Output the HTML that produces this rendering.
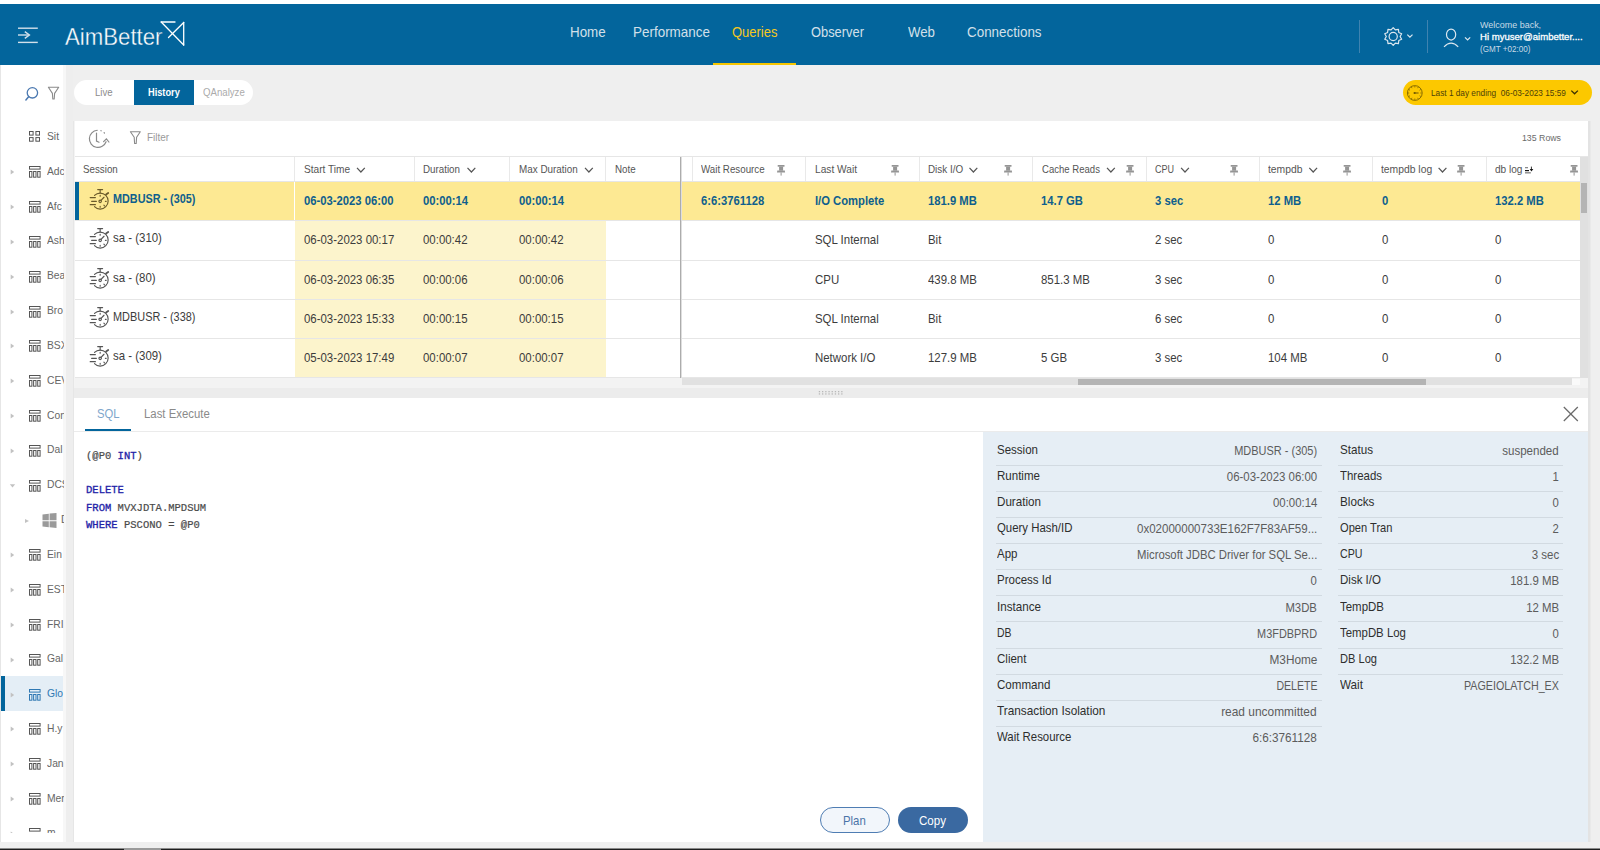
<!DOCTYPE html>
<html><head><meta charset="utf-8"><title>AimBetter - Queries</title>
<style>
html,body{margin:0;padding:0;}
body{width:1600px;height:850px;overflow:hidden;position:relative;background:#efefef;font-family:"Liberation Sans",sans-serif;}
.t{position:absolute;white-space:pre;}
svg{overflow:visible}
</style></head><body>
<div style="position:absolute;left:0px;top:0px;width:1600px;height:4px;background:#ffffff;"></div>
<div style="position:absolute;left:0px;top:4px;width:1600px;height:61px;background:#03659c;"></div>
<div style="position:absolute;left:0px;top:842px;width:1600px;height:6px;background:#efefef;"></div>
<div style="position:absolute;left:0px;top:848px;width:1600px;height:1px;background:#8a8a8a;"></div>
<div style="position:absolute;left:0px;top:849px;width:1600px;height:1px;background:#1e1e1e;"></div>
<div style="position:absolute;left:124px;top:848px;width:37px;height:2px;background:#9a9a9a;"></div>
<svg style="position:absolute;left:0px;top:0px;" width="60" height="65" viewBox="0 0 60 65"><g stroke="#d3e0ea" stroke-width="1.4" fill="none"><line x1="18" y1="28.2" x2="37.8" y2="28.2"/><line x1="18" y1="42.4" x2="37.8" y2="42.4"/><line x1="18" y1="35" x2="29.2" y2="35"/><polyline points="24.8,31.6 29.4,35 24.8,38.4"/></g></svg>
<div class="t" style="left:64.80px;transform-origin:0 0;top:26.39px;font-size:23.4px;line-height:23.4px;color:#ffffff;transform:scaleX(0.9491);-webkit-text-stroke:0.35px #03659c;">AimBetter</div>
<svg style="position:absolute;left:150px;top:15px;" width="45" height="40" viewBox="0 0 45 40"><g stroke="#ffffff" stroke-width="1.3" fill="none" stroke-linecap="round"><line x1="11.2" y1="7" x2="25" y2="7"/><line x1="11.2" y1="7" x2="33.7" y2="30"/><line x1="33.7" y1="7.5" x2="33.7" y2="30"/><line x1="33.7" y1="7.5" x2="18.5" y2="22.5"/></g></svg>
<div class="t" style="left:569.80px;transform-origin:0 0;top:25.31px;font-size:14.4px;line-height:14.4px;color:#d3e0ea;transform:scaleX(0.9294);">Home</div>
<div class="t" style="left:632.50px;transform-origin:0 0;top:25.31px;font-size:14.4px;line-height:14.4px;color:#d3e0ea;transform:scaleX(0.9340);">Performance</div>
<div class="t" style="left:731.50px;transform-origin:0 0;top:25.31px;font-size:14.4px;line-height:14.4px;color:#f6c81e;transform:scaleX(0.9024);">Queries</div>
<div class="t" style="left:811.00px;transform-origin:0 0;top:25.31px;font-size:14.4px;line-height:14.4px;color:#d3e0ea;transform:scaleX(0.8950);">Observer</div>
<div class="t" style="left:907.50px;transform-origin:0 0;top:25.31px;font-size:14.4px;line-height:14.4px;color:#d3e0ea;transform:scaleX(0.9200);">Web</div>
<div class="t" style="left:967.00px;transform-origin:0 0;top:25.31px;font-size:14.4px;line-height:14.4px;color:#d3e0ea;transform:scaleX(0.9319);">Connections</div>
<div style="position:absolute;left:713px;top:63px;width:83px;height:2px;background:#f7c600;"></div>
<div style="position:absolute;left:1359px;top:20px;width:1px;height:33px;background:#3f83b0;"></div>
<div style="position:absolute;left:1426.5px;top:20px;width:1.0px;height:33px;background:#3f83b0;"></div>
<svg style="position:absolute;left:0px;top:0px;pointer-events:none;" width="1600" height="65" viewBox="0 0 1600 65"><g stroke="#dce7ef" stroke-width="1.2" fill="none"><polygon points="1393.20,27.60 1395.33,29.94 1398.43,29.30 1398.78,32.44 1401.66,33.75 1400.10,36.50 1401.66,39.25 1398.78,40.56 1398.43,43.70 1395.33,43.06 1393.20,45.40 1391.07,43.06 1387.97,43.70 1387.62,40.56 1384.74,39.25 1386.30,36.50 1384.74,33.75 1387.62,32.44 1387.97,29.30 1391.07,29.94" stroke-linejoin="round"/><circle cx="1393.2" cy="36.5" r="4.1"/><polyline points="1407.3,34.6 1409.9,37.2 1412.5,34.6"/><ellipse cx="1451.1" cy="34.6" rx="4.6" ry="5.5"/><path d="M1444,46.8 Q1451.1,39.5 1458.2,46.8"/><polyline points="1465,37.4 1467.6,40 1470.2,37.4"/></g></svg>
<div class="t" style="left:1479.80px;transform-origin:0 0;top:21.08px;font-size:9.0px;line-height:9.0px;color:#c9dae6;transform:scaleX(0.9958);">Welcome back,</div>
<div class="t" style="left:1479.80px;transform-origin:0 0;top:32.20px;font-size:9.8px;line-height:9.8px;color:#ffffff;transform:scaleX(0.9757);-webkit-text-stroke:0.3px #ffffff;">Hi myuser@aimbetter....</div>
<div class="t" style="left:1479.60px;transform-origin:0 0;top:45.66px;font-size:8.2px;line-height:8.2px;color:#c9dae6;transform:scaleX(0.9859);">(GMT +02:00)</div>
<div style="position:absolute;left:0px;top:65px;width:63px;height:777px;background:#ffffff;box-shadow:inset 1px 0 0 #e6e6e6;"></div>
<div style="position:absolute;left:63px;top:65px;width:3px;height:777px;background:#f7f7f7;"></div>
<div style="position:absolute;left:66px;top:65px;width:7px;height:777px;background:#eeeeee;"></div>
<div style="position:absolute;left:73px;top:121px;width:1px;height:721px;background:#e6e6e6;"></div>
<svg style="position:absolute;left:0px;top:60px;" width="70" height="50" viewBox="0 0 70 50"><g fill="none" stroke-linecap="round"><circle cx="32.4" cy="32.8" r="5.2" stroke="#4a78b0" stroke-width="1.3"/><line x1="28.6" y1="36.8" x2="25.9" y2="39.9" stroke="#4a78b0" stroke-width="1.5"/><path d="M48.4,27.3 L58.7,27.3 L54.6,33.4 L54.2,39 L52.8,39 L52.4,33.4 Z" stroke="#8a8a8a" stroke-width="1.1" stroke-linejoin="round"/></g></svg>
<svg style="position:absolute;left:28px;top:130px;" width="14" height="14" viewBox="0 0 14 14"><g fill="none" stroke="#555" stroke-width="1"><rect x="1.5" y="1.5" width="3.6" height="3.6"/><rect x="7.9" y="1.5" width="3.6" height="3.6"/><rect x="1.5" y="7.6" width="3.6" height="3.6"/><rect x="7.9" y="7.6" width="3.6" height="3.6"/></g></svg>
<div class="t" style="left:46.80px;transform-origin:0 0;top:130.72px;font-size:11.2px;line-height:11.2px;color:#666666;transform:scaleX(0.9200);">Sit</div>
<div style="position:absolute;left:0;top:65px;width:64px;height:768px;overflow:hidden;">
<svg style="position:absolute;left:0px;top:97.32px;" width="20" height="20" viewBox="0 0 20 20"><polygon points="10.7,7.4 14.2,10 10.7,12.6" fill="#c2c2c2"/></svg>
<svg style="position:absolute;left:28px;top:100.32px;" width="14" height="16" viewBox="0 0 14 16"><g fill="none" stroke="#555555" stroke-width="1"><rect x="1.5" y="1.5" width="10.6" height="2.6"/><rect x="1.5" y="6.5" width="2.4" height="5.7"/><rect x="5.6" y="6.5" width="2.4" height="5.7"/><rect x="9.7" y="6.5" width="2.4" height="5.7"/></g></svg>
<div class="t" style="left:46.80px;transform-origin:0 0;top:100.84px;font-size:11.2px;line-height:11.2px;color:#666666;transform:scaleX(0.9200);">Adc</div>
<svg style="position:absolute;left:0px;top:132.14px;" width="20" height="20" viewBox="0 0 20 20"><polygon points="10.7,7.4 14.2,10 10.7,12.6" fill="#c2c2c2"/></svg>
<svg style="position:absolute;left:28px;top:135.14px;" width="14" height="16" viewBox="0 0 14 16"><g fill="none" stroke="#555555" stroke-width="1"><rect x="1.5" y="1.5" width="10.6" height="2.6"/><rect x="1.5" y="6.5" width="2.4" height="5.7"/><rect x="5.6" y="6.5" width="2.4" height="5.7"/><rect x="9.7" y="6.5" width="2.4" height="5.7"/></g></svg>
<div class="t" style="left:46.80px;transform-origin:0 0;top:135.66px;font-size:11.2px;line-height:11.2px;color:#666666;transform:scaleX(0.9200);">Afc</div>
<svg style="position:absolute;left:0px;top:166.96px;" width="20" height="20" viewBox="0 0 20 20"><polygon points="10.7,7.4 14.2,10 10.7,12.6" fill="#c2c2c2"/></svg>
<svg style="position:absolute;left:28px;top:169.96px;" width="14" height="16" viewBox="0 0 14 16"><g fill="none" stroke="#555555" stroke-width="1"><rect x="1.5" y="1.5" width="10.6" height="2.6"/><rect x="1.5" y="6.5" width="2.4" height="5.7"/><rect x="5.6" y="6.5" width="2.4" height="5.7"/><rect x="9.7" y="6.5" width="2.4" height="5.7"/></g></svg>
<div class="t" style="left:46.80px;transform-origin:0 0;top:170.48px;font-size:11.2px;line-height:11.2px;color:#666666;transform:scaleX(0.9200);">Ash</div>
<svg style="position:absolute;left:0px;top:201.77999999999997px;" width="20" height="20" viewBox="0 0 20 20"><polygon points="10.7,7.4 14.2,10 10.7,12.6" fill="#c2c2c2"/></svg>
<svg style="position:absolute;left:28px;top:204.77999999999997px;" width="14" height="16" viewBox="0 0 14 16"><g fill="none" stroke="#555555" stroke-width="1"><rect x="1.5" y="1.5" width="10.6" height="2.6"/><rect x="1.5" y="6.5" width="2.4" height="5.7"/><rect x="5.6" y="6.5" width="2.4" height="5.7"/><rect x="9.7" y="6.5" width="2.4" height="5.7"/></g></svg>
<div class="t" style="left:46.80px;transform-origin:0 0;top:205.30px;font-size:11.2px;line-height:11.2px;color:#666666;transform:scaleX(0.9200);">Bea</div>
<svg style="position:absolute;left:0px;top:236.60000000000002px;" width="20" height="20" viewBox="0 0 20 20"><polygon points="10.7,7.4 14.2,10 10.7,12.6" fill="#c2c2c2"/></svg>
<svg style="position:absolute;left:28px;top:239.60000000000002px;" width="14" height="16" viewBox="0 0 14 16"><g fill="none" stroke="#555555" stroke-width="1"><rect x="1.5" y="1.5" width="10.6" height="2.6"/><rect x="1.5" y="6.5" width="2.4" height="5.7"/><rect x="5.6" y="6.5" width="2.4" height="5.7"/><rect x="9.7" y="6.5" width="2.4" height="5.7"/></g></svg>
<div class="t" style="left:46.80px;transform-origin:0 0;top:240.12px;font-size:11.2px;line-height:11.2px;color:#666666;transform:scaleX(0.9200);">Bro</div>
<svg style="position:absolute;left:0px;top:271.42px;" width="20" height="20" viewBox="0 0 20 20"><polygon points="10.7,7.4 14.2,10 10.7,12.6" fill="#c2c2c2"/></svg>
<svg style="position:absolute;left:28px;top:274.42px;" width="14" height="16" viewBox="0 0 14 16"><g fill="none" stroke="#555555" stroke-width="1"><rect x="1.5" y="1.5" width="10.6" height="2.6"/><rect x="1.5" y="6.5" width="2.4" height="5.7"/><rect x="5.6" y="6.5" width="2.4" height="5.7"/><rect x="9.7" y="6.5" width="2.4" height="5.7"/></g></svg>
<div class="t" style="left:46.80px;transform-origin:0 0;top:274.94px;font-size:11.2px;line-height:11.2px;color:#666666;transform:scaleX(0.9200);">BSX</div>
<svg style="position:absolute;left:0px;top:306.24px;" width="20" height="20" viewBox="0 0 20 20"><polygon points="10.7,7.4 14.2,10 10.7,12.6" fill="#c2c2c2"/></svg>
<svg style="position:absolute;left:28px;top:309.24px;" width="14" height="16" viewBox="0 0 14 16"><g fill="none" stroke="#555555" stroke-width="1"><rect x="1.5" y="1.5" width="10.6" height="2.6"/><rect x="1.5" y="6.5" width="2.4" height="5.7"/><rect x="5.6" y="6.5" width="2.4" height="5.7"/><rect x="9.7" y="6.5" width="2.4" height="5.7"/></g></svg>
<div class="t" style="left:46.80px;transform-origin:0 0;top:309.76px;font-size:11.2px;line-height:11.2px;color:#666666;transform:scaleX(0.9200);">CEV</div>
<svg style="position:absolute;left:0px;top:341.06px;" width="20" height="20" viewBox="0 0 20 20"><polygon points="10.7,7.4 14.2,10 10.7,12.6" fill="#c2c2c2"/></svg>
<svg style="position:absolute;left:28px;top:344.06px;" width="14" height="16" viewBox="0 0 14 16"><g fill="none" stroke="#555555" stroke-width="1"><rect x="1.5" y="1.5" width="10.6" height="2.6"/><rect x="1.5" y="6.5" width="2.4" height="5.7"/><rect x="5.6" y="6.5" width="2.4" height="5.7"/><rect x="9.7" y="6.5" width="2.4" height="5.7"/></g></svg>
<div class="t" style="left:46.80px;transform-origin:0 0;top:344.58px;font-size:11.2px;line-height:11.2px;color:#666666;transform:scaleX(0.9200);">Con</div>
<svg style="position:absolute;left:0px;top:375.88px;" width="20" height="20" viewBox="0 0 20 20"><polygon points="10.7,7.4 14.2,10 10.7,12.6" fill="#c2c2c2"/></svg>
<svg style="position:absolute;left:28px;top:378.88px;" width="14" height="16" viewBox="0 0 14 16"><g fill="none" stroke="#555555" stroke-width="1"><rect x="1.5" y="1.5" width="10.6" height="2.6"/><rect x="1.5" y="6.5" width="2.4" height="5.7"/><rect x="5.6" y="6.5" width="2.4" height="5.7"/><rect x="9.7" y="6.5" width="2.4" height="5.7"/></g></svg>
<div class="t" style="left:46.80px;transform-origin:0 0;top:379.40px;font-size:11.2px;line-height:11.2px;color:#666666;transform:scaleX(0.9200);">Dal</div>
<svg style="position:absolute;left:0px;top:410.7px;" width="20" height="20" viewBox="0 0 20 20"><polygon points="9.8,8.3 15.2,8.3 12.5,11.5" fill="#c2c2c2"/></svg>
<svg style="position:absolute;left:28px;top:413.7px;" width="14" height="16" viewBox="0 0 14 16"><g fill="none" stroke="#555555" stroke-width="1"><rect x="1.5" y="1.5" width="10.6" height="2.6"/><rect x="1.5" y="6.5" width="2.4" height="5.7"/><rect x="5.6" y="6.5" width="2.4" height="5.7"/><rect x="9.7" y="6.5" width="2.4" height="5.7"/></g></svg>
<div class="t" style="left:46.80px;transform-origin:0 0;top:414.22px;font-size:11.2px;line-height:11.2px;color:#666666;transform:scaleX(0.9200);">DCS</div>
<svg style="position:absolute;left:20px;top:445.52px;" width="45" height="20" viewBox="0 0 45 20"><polygon points="5,8 9,10 5,12" fill="#c2c2c2"/><g fill="#9a9a9a"><path d="M22.5,3.4 L28.8,2.7 L28.8,9.3 L22.5,9.3 Z"/><path d="M29.6,2.6 L36.5,1.9 L36.5,9.3 L29.6,9.3 Z"/><path d="M22.5,10.2 L28.8,10.2 L28.8,16.2 L22.5,15.6 Z"/><path d="M29.6,10.2 L36.5,10.2 L36.5,17 L29.6,16.3 Z"/></g></svg>
<div class="t" style="left:61.00px;transform-origin:0 0;top:449.04px;font-size:11.2px;line-height:11.2px;color:#666666;transform:scaleX(0.9200);">D</div>
<svg style="position:absolute;left:0px;top:480.34000000000003px;" width="20" height="20" viewBox="0 0 20 20"><polygon points="10.7,7.4 14.2,10 10.7,12.6" fill="#c2c2c2"/></svg>
<svg style="position:absolute;left:28px;top:483.34000000000003px;" width="14" height="16" viewBox="0 0 14 16"><g fill="none" stroke="#555555" stroke-width="1"><rect x="1.5" y="1.5" width="10.6" height="2.6"/><rect x="1.5" y="6.5" width="2.4" height="5.7"/><rect x="5.6" y="6.5" width="2.4" height="5.7"/><rect x="9.7" y="6.5" width="2.4" height="5.7"/></g></svg>
<div class="t" style="left:46.80px;transform-origin:0 0;top:483.86px;font-size:11.2px;line-height:11.2px;color:#666666;transform:scaleX(0.9200);">Ein</div>
<svg style="position:absolute;left:0px;top:515.1600000000001px;" width="20" height="20" viewBox="0 0 20 20"><polygon points="10.7,7.4 14.2,10 10.7,12.6" fill="#c2c2c2"/></svg>
<svg style="position:absolute;left:28px;top:518.1600000000001px;" width="14" height="16" viewBox="0 0 14 16"><g fill="none" stroke="#555555" stroke-width="1"><rect x="1.5" y="1.5" width="10.6" height="2.6"/><rect x="1.5" y="6.5" width="2.4" height="5.7"/><rect x="5.6" y="6.5" width="2.4" height="5.7"/><rect x="9.7" y="6.5" width="2.4" height="5.7"/></g></svg>
<div class="t" style="left:46.80px;transform-origin:0 0;top:518.68px;font-size:11.2px;line-height:11.2px;color:#666666;transform:scaleX(0.9200);">EST</div>
<svg style="position:absolute;left:0px;top:549.98px;" width="20" height="20" viewBox="0 0 20 20"><polygon points="10.7,7.4 14.2,10 10.7,12.6" fill="#c2c2c2"/></svg>
<svg style="position:absolute;left:28px;top:552.98px;" width="14" height="16" viewBox="0 0 14 16"><g fill="none" stroke="#555555" stroke-width="1"><rect x="1.5" y="1.5" width="10.6" height="2.6"/><rect x="1.5" y="6.5" width="2.4" height="5.7"/><rect x="5.6" y="6.5" width="2.4" height="5.7"/><rect x="9.7" y="6.5" width="2.4" height="5.7"/></g></svg>
<div class="t" style="left:46.80px;transform-origin:0 0;top:553.50px;font-size:11.2px;line-height:11.2px;color:#666666;transform:scaleX(0.9200);">FRI</div>
<svg style="position:absolute;left:0px;top:584.8px;" width="20" height="20" viewBox="0 0 20 20"><polygon points="10.7,7.4 14.2,10 10.7,12.6" fill="#c2c2c2"/></svg>
<svg style="position:absolute;left:28px;top:587.8px;" width="14" height="16" viewBox="0 0 14 16"><g fill="none" stroke="#555555" stroke-width="1"><rect x="1.5" y="1.5" width="10.6" height="2.6"/><rect x="1.5" y="6.5" width="2.4" height="5.7"/><rect x="5.6" y="6.5" width="2.4" height="5.7"/><rect x="9.7" y="6.5" width="2.4" height="5.7"/></g></svg>
<div class="t" style="left:46.80px;transform-origin:0 0;top:588.32px;font-size:11.2px;line-height:11.2px;color:#666666;transform:scaleX(0.9200);">Gal</div>
<div style="position:absolute;left:1px;top:611.12px;width:62px;height:35.0px;background:#e4eef6;"></div>
<div style="position:absolute;left:1px;top:611.12px;width:4px;height:35.0px;background:#03659c;"></div>
<svg style="position:absolute;left:0px;top:619.62px;" width="20" height="20" viewBox="0 0 20 20"><polygon points="10.7,7.4 14.2,10 10.7,12.6" fill="#c2c2c2"/></svg>
<svg style="position:absolute;left:28px;top:622.62px;" width="14" height="16" viewBox="0 0 14 16"><g fill="none" stroke="#2f78b3" stroke-width="1"><rect x="1.5" y="1.5" width="10.6" height="2.6"/><rect x="1.5" y="6.5" width="2.4" height="5.7"/><rect x="5.6" y="6.5" width="2.4" height="5.7"/><rect x="9.7" y="6.5" width="2.4" height="5.7"/></g></svg>
<div class="t" style="left:46.80px;transform-origin:0 0;top:623.14px;font-size:11.2px;line-height:11.2px;color:#2f78b3;transform:scaleX(0.9200);">Glo</div>
<svg style="position:absolute;left:0px;top:654.44px;" width="20" height="20" viewBox="0 0 20 20"><polygon points="10.7,7.4 14.2,10 10.7,12.6" fill="#c2c2c2"/></svg>
<svg style="position:absolute;left:28px;top:657.44px;" width="14" height="16" viewBox="0 0 14 16"><g fill="none" stroke="#555555" stroke-width="1"><rect x="1.5" y="1.5" width="10.6" height="2.6"/><rect x="1.5" y="6.5" width="2.4" height="5.7"/><rect x="5.6" y="6.5" width="2.4" height="5.7"/><rect x="9.7" y="6.5" width="2.4" height="5.7"/></g></svg>
<div class="t" style="left:46.80px;transform-origin:0 0;top:657.96px;font-size:11.2px;line-height:11.2px;color:#666666;transform:scaleX(0.9200);">H.y</div>
<svg style="position:absolute;left:0px;top:689.26px;" width="20" height="20" viewBox="0 0 20 20"><polygon points="10.7,7.4 14.2,10 10.7,12.6" fill="#c2c2c2"/></svg>
<svg style="position:absolute;left:28px;top:692.26px;" width="14" height="16" viewBox="0 0 14 16"><g fill="none" stroke="#555555" stroke-width="1"><rect x="1.5" y="1.5" width="10.6" height="2.6"/><rect x="1.5" y="6.5" width="2.4" height="5.7"/><rect x="5.6" y="6.5" width="2.4" height="5.7"/><rect x="9.7" y="6.5" width="2.4" height="5.7"/></g></svg>
<div class="t" style="left:46.80px;transform-origin:0 0;top:692.78px;font-size:11.2px;line-height:11.2px;color:#666666;transform:scaleX(0.9200);">Jan</div>
<svg style="position:absolute;left:0px;top:724.08px;" width="20" height="20" viewBox="0 0 20 20"><polygon points="10.7,7.4 14.2,10 10.7,12.6" fill="#c2c2c2"/></svg>
<svg style="position:absolute;left:28px;top:727.08px;" width="14" height="16" viewBox="0 0 14 16"><g fill="none" stroke="#555555" stroke-width="1"><rect x="1.5" y="1.5" width="10.6" height="2.6"/><rect x="1.5" y="6.5" width="2.4" height="5.7"/><rect x="5.6" y="6.5" width="2.4" height="5.7"/><rect x="9.7" y="6.5" width="2.4" height="5.7"/></g></svg>
<div class="t" style="left:46.80px;transform-origin:0 0;top:727.60px;font-size:11.2px;line-height:11.2px;color:#666666;transform:scaleX(0.9200);">Mer</div>
<svg style="position:absolute;left:0px;top:758.9px;" width="20" height="20" viewBox="0 0 20 20"><polygon points="10.7,7.4 14.2,10 10.7,12.6" fill="#c2c2c2"/></svg>
<svg style="position:absolute;left:28px;top:761.9px;" width="14" height="16" viewBox="0 0 14 16"><g fill="none" stroke="#555555" stroke-width="1"><rect x="1.5" y="1.5" width="10.6" height="2.6"/><rect x="1.5" y="6.5" width="2.4" height="5.7"/><rect x="5.6" y="6.5" width="2.4" height="5.7"/><rect x="9.7" y="6.5" width="2.4" height="5.7"/></g></svg>
<div class="t" style="left:46.80px;transform-origin:0 0;top:762.42px;font-size:11.2px;line-height:11.2px;color:#666666;transform:scaleX(0.9200);">m..</div>
</div>
<div style="position:absolute;left:74px;top:80px;width:179px;height:25px;background:#ffffff;border-radius:12.5px;"></div>
<div style="position:absolute;left:134px;top:80px;width:59.5px;height:25px;background:#03659c;"></div>
<div class="t" style="left:95.30px;transform-origin:0 0;top:86.99px;font-size:11px;line-height:11px;color:#8c8c8c;transform:scaleX(0.8722);">Live</div>
<div class="t" style="left:148.20px;transform-origin:0 0;top:86.99px;font-size:11px;line-height:11px;color:#ffffff;font-weight:700;transform:scaleX(0.8391);">History</div>
<div class="t" style="left:203.00px;transform-origin:0 0;top:86.99px;font-size:11px;line-height:11px;color:#ababab;transform:scaleX(0.8765);">QAnalyze</div>
<div style="position:absolute;left:1403px;top:80px;width:189px;height:25px;background:#fcc800;border-radius:12.5px;"></div>
<svg style="position:absolute;left:1400px;top:78px;" width="30" height="30" viewBox="0 0 30 30"><g fill="none" stroke="#6e5800" stroke-width="0.8"><circle cx="14.8" cy="15" r="7.4"/><line x1="20.40" y1="15.00" x2="21.60" y2="15.00"/><line x1="19.65" y1="17.80" x2="20.69" y2="18.40"/><line x1="17.60" y1="19.85" x2="18.20" y2="20.89"/><line x1="14.80" y1="20.60" x2="14.80" y2="21.80"/><line x1="12.00" y1="19.85" x2="11.40" y2="20.89"/><line x1="9.95" y1="17.80" x2="8.91" y2="18.40"/><line x1="9.20" y1="15.00" x2="8.00" y2="15.00"/><line x1="9.95" y1="12.20" x2="8.91" y2="11.60"/><line x1="12.00" y1="10.15" x2="11.40" y2="9.11"/><line x1="14.80" y1="9.40" x2="14.80" y2="8.20"/><line x1="17.60" y1="10.15" x2="18.20" y2="9.11"/><line x1="19.65" y1="12.20" x2="20.69" y2="11.60"/><line x1="14.8" y1="15" x2="18.6" y2="15" stroke-width="1"/></g><circle cx="14.6" cy="15" r="1.1" fill="#6e5800"/></svg>
<div class="t" style="left:1431.00px;transform-origin:0 0;top:88.72px;font-size:8.6px;line-height:8.6px;color:#4d3f08;transform:scaleX(0.9603);">Last 1 day ending  06-03-2023 15:59</div>
<svg style="position:absolute;left:1560px;top:80px;" width="30" height="25" viewBox="0 0 30 25"><polyline points="11.3,10.6 14.6,13.8 17.9,10.6" fill="none" stroke="#3b3000" stroke-width="1.3"/></svg>
<div style="position:absolute;left:74px;top:121px;width:1514px;height:265px;background:#ffffff;"></div>
<div style="position:absolute;left:74px;top:121px;width:1px;height:265px;background:#f4f4f4;"></div>
<div style="position:absolute;left:75px;top:155.5px;width:1513px;height:1.1999999999999886px;background:#e6e6e6;"></div>
<svg style="position:absolute;left:80px;top:120px;" width="80" height="40" viewBox="0 0 80 40"><g fill="none" stroke="#8a8a8a" stroke-width="1.2" stroke-linecap="round"><path d="M 26.08,21.74 A 8.6,8.6 0 1 1 17.25,10.23"/><path d="M 20.9,10.7 L 21.2,10.8 M 24.1,12.7 L 24.4,13"/><polyline points="16.5,13 16.5,21 19,22.2"/><polyline points="23.6,21.6 26.4,18.8 28.9,22"/><path d="M50.4,11.8 L60.3,11.8 L56.6,17.2 L56.2,23.5 L54.6,23.5 L54.2,17.2 Z" stroke-linejoin="round" stroke-width="1.1"/></g></svg>
<div class="t" style="left:146.80px;transform-origin:0 0;top:131.69px;font-size:11px;line-height:11px;color:#9a9a9a;transform:scaleX(0.9082);">Filter</div>
<div class="t" style="left:1522.00px;transform-origin:0 0;top:133.47px;font-size:9.6px;line-height:9.6px;color:#6a6a6a;transform:scaleX(0.9136);">135 Rows</div>
<div style="position:absolute;left:294.0px;top:156.7px;width:1.0px;height:25.100000000000023px;background:#e9e9e9;"></div>
<div style="position:absolute;left:413.5px;top:156.7px;width:1.0px;height:25.100000000000023px;background:#e9e9e9;"></div>
<div style="position:absolute;left:509.0px;top:156.7px;width:1.0px;height:25.100000000000023px;background:#e9e9e9;"></div>
<div style="position:absolute;left:605.0px;top:156.7px;width:1.0px;height:25.100000000000023px;background:#e9e9e9;"></div>
<div style="position:absolute;left:692.0px;top:156.7px;width:1.0px;height:25.100000000000023px;background:#e9e9e9;"></div>
<div style="position:absolute;left:805.0px;top:156.7px;width:1.0px;height:25.100000000000023px;background:#e9e9e9;"></div>
<div style="position:absolute;left:919.0px;top:156.7px;width:1.0px;height:25.100000000000023px;background:#e9e9e9;"></div>
<div style="position:absolute;left:1032.0px;top:156.7px;width:1.0px;height:25.100000000000023px;background:#e9e9e9;"></div>
<div style="position:absolute;left:1145.5px;top:156.7px;width:1.0px;height:25.100000000000023px;background:#e9e9e9;"></div>
<div style="position:absolute;left:1259.0px;top:156.7px;width:1.0px;height:25.100000000000023px;background:#e9e9e9;"></div>
<div style="position:absolute;left:1372.0px;top:156.7px;width:1.0px;height:25.100000000000023px;background:#e9e9e9;"></div>
<div style="position:absolute;left:1485.5px;top:156.7px;width:1.0px;height:25.100000000000023px;background:#e9e9e9;"></div>
<div style="position:absolute;left:75px;top:181.0px;width:1505px;height:0.8000000000000114px;background:#e6e6e6;"></div>
<div class="t" style="left:82.50px;transform-origin:0 0;top:164.27px;font-size:11.2px;line-height:11.2px;color:#555555;transform:scaleX(0.8733);">Session</div>
<div class="t" style="left:303.75px;transform-origin:0 0;top:164.27px;font-size:11.2px;line-height:11.2px;color:#555555;transform:scaleX(0.9062);">Start Time</div>
<div class="t" style="left:423.00px;transform-origin:0 0;top:164.27px;font-size:11.2px;line-height:11.2px;color:#555555;transform:scaleX(0.8740);">Duration</div>
<div class="t" style="left:518.75px;transform-origin:0 0;top:164.27px;font-size:11.2px;line-height:11.2px;color:#555555;transform:scaleX(0.8821);">Max Duration</div>
<div class="t" style="left:615.00px;transform-origin:0 0;top:164.27px;font-size:11.2px;line-height:11.2px;color:#555555;transform:scaleX(0.8771);">Note</div>
<div class="t" style="left:701.40px;transform-origin:0 0;top:164.27px;font-size:11.2px;line-height:11.2px;color:#555555;transform:scaleX(0.8722);">Wait Resource</div>
<svg style="position:absolute;left:777px;top:164.9px;" width="10" height="12" viewBox="0 0 10 12"><g fill="#959595"><rect x="0.7" y="0" width="6.8" height="1.7"/><rect x="2.1" y="1.6" width="4" height="4.1"/><path d="M0.3,5.6 L7.8,5.6 L8.1,7.5 L0,7.5 Z"/><rect x="3.6" y="7.4" width="1" height="3.2"/></g></svg>
<div class="t" style="left:814.60px;transform-origin:0 0;top:164.27px;font-size:11.2px;line-height:11.2px;color:#555555;transform:scaleX(0.9100);">Last Wait</div>
<svg style="position:absolute;left:890.6px;top:164.9px;" width="10" height="12" viewBox="0 0 10 12"><g fill="#959595"><rect x="0.7" y="0" width="6.8" height="1.7"/><rect x="2.1" y="1.6" width="4" height="4.1"/><path d="M0.3,5.6 L7.8,5.6 L8.1,7.5 L0,7.5 Z"/><rect x="3.6" y="7.4" width="1" height="3.2"/></g></svg>
<div class="t" style="left:928.20px;transform-origin:0 0;top:164.27px;font-size:11.2px;line-height:11.2px;color:#555555;transform:scaleX(0.8814);">Disk I/O</div>
<svg style="position:absolute;left:1003.8px;top:164.9px;" width="10" height="12" viewBox="0 0 10 12"><g fill="#959595"><rect x="0.7" y="0" width="6.8" height="1.7"/><rect x="2.1" y="1.6" width="4" height="4.1"/><path d="M0.3,5.6 L7.8,5.6 L8.1,7.5 L0,7.5 Z"/><rect x="3.6" y="7.4" width="1" height="3.2"/></g></svg>
<div class="t" style="left:1041.80px;transform-origin:0 0;top:164.27px;font-size:11.2px;line-height:11.2px;color:#555555;transform:scaleX(0.8547);">Cache Reads</div>
<svg style="position:absolute;left:1125.5px;top:164.9px;" width="10" height="12" viewBox="0 0 10 12"><g fill="#959595"><rect x="0.7" y="0" width="6.8" height="1.7"/><rect x="2.1" y="1.6" width="4" height="4.1"/><path d="M0.3,5.6 L7.8,5.6 L8.1,7.5 L0,7.5 Z"/><rect x="3.6" y="7.4" width="1" height="3.2"/></g></svg>
<div class="t" style="left:1154.60px;transform-origin:0 0;top:164.27px;font-size:11.2px;line-height:11.2px;color:#555555;transform:scaleX(0.8077);">CPU</div>
<svg style="position:absolute;left:1230.2px;top:164.9px;" width="10" height="12" viewBox="0 0 10 12"><g fill="#959595"><rect x="0.7" y="0" width="6.8" height="1.7"/><rect x="2.1" y="1.6" width="4" height="4.1"/><path d="M0.3,5.6 L7.8,5.6 L8.1,7.5 L0,7.5 Z"/><rect x="3.6" y="7.4" width="1" height="3.2"/></g></svg>
<div class="t" style="left:1268.00px;transform-origin:0 0;top:164.27px;font-size:11.2px;line-height:11.2px;color:#555555;transform:scaleX(0.9235);">tempdb</div>
<svg style="position:absolute;left:1343px;top:164.9px;" width="10" height="12" viewBox="0 0 10 12"><g fill="#959595"><rect x="0.7" y="0" width="6.8" height="1.7"/><rect x="2.1" y="1.6" width="4" height="4.1"/><path d="M0.3,5.6 L7.8,5.6 L8.1,7.5 L0,7.5 Z"/><rect x="3.6" y="7.4" width="1" height="3.2"/></g></svg>
<div class="t" style="left:1381.30px;transform-origin:0 0;top:164.27px;font-size:11.2px;line-height:11.2px;color:#555555;transform:scaleX(0.9239);">tempdb log</div>
<svg style="position:absolute;left:1457px;top:164.9px;" width="10" height="12" viewBox="0 0 10 12"><g fill="#959595"><rect x="0.7" y="0" width="6.8" height="1.7"/><rect x="2.1" y="1.6" width="4" height="4.1"/><path d="M0.3,5.6 L7.8,5.6 L8.1,7.5 L0,7.5 Z"/><rect x="3.6" y="7.4" width="1" height="3.2"/></g></svg>
<div class="t" style="left:1495.00px;transform-origin:0 0;top:164.27px;font-size:11.2px;line-height:11.2px;color:#555555;transform:scaleX(0.9012);">db log</div>
<svg style="position:absolute;left:1570.3px;top:164.9px;" width="10" height="12" viewBox="0 0 10 12"><g fill="#959595"><rect x="0.7" y="0" width="6.8" height="1.7"/><rect x="2.1" y="1.6" width="4" height="4.1"/><path d="M0.3,5.6 L7.8,5.6 L8.1,7.5 L0,7.5 Z"/><rect x="3.6" y="7.4" width="1" height="3.2"/></g></svg>
<svg style="position:absolute;left:0px;top:0px;pointer-events:none;" width="1600" height="850" viewBox="0 0 1600 850"><g fill="none" stroke="#555" stroke-width="1.2"><polyline points="357.0,167.8 360.9,172.0 364.8,167.8"/><polyline points="467.5,167.8 471.4,172.0 475.3,167.8"/><polyline points="585.0,167.8 588.9,172.0 592.8,167.8"/><polyline points="969.5,167.8 973.4,172.0 977.3,167.8"/><polyline points="1107.0,167.8 1110.9,172.0 1114.8,167.8"/><polyline points="1181.1,167.8 1185.0,172.0 1188.9,167.8"/><polyline points="1309.3,167.8 1313.2,172.0 1317.1,167.8"/><polyline points="1438.6,167.8 1442.5,172.0 1446.4,167.8"/></g></svg>
<svg style="position:absolute;left:1520px;top:160px;" width="16" height="16" viewBox="0 0 16 16"><rect x="5" y="7" width="3" height="1.3" fill="#8a8a8a"/><rect x="5" y="10" width="4" height="1.2" fill="#111"/><rect x="5" y="12.1" width="5.8" height="1.4" fill="#8a8a8a"/><rect x="10.9" y="6.6" width="1" height="2.8" fill="#333"/><polygon points="9.7,9.1 13.3,9.1 11.4,11.6" fill="#111"/></svg>
<div style="position:absolute;left:75px;top:182px;width:1505px;height:38px;background:#fde993;"></div>
<div style="position:absolute;left:75px;top:182px;width:4px;height:38px;background:#03659c;"></div>
<div style="position:absolute;left:294px;top:182px;width:1px;height:38px;background:#ffffff;"></div>
<div style="position:absolute;left:75px;top:220px;width:1505px;height:1px;background:#e6e6e6;"></div>
<div class="t" style="left:113.00px;transform-origin:0 0;top:192.66px;font-size:12.1px;line-height:12.1px;color:#0f5f8d;font-weight:700;transform:scaleX(0.8946);">MDBUSR - (305)</div>
<div class="t" style="left:303.60px;transform-origin:0 0;top:194.56px;font-size:12.1px;line-height:12.1px;color:#0f5f8d;font-weight:700;transform:scaleX(0.9300);">06-03-2023 06:00</div>
<div class="t" style="left:422.80px;transform-origin:0 0;top:194.56px;font-size:12.1px;line-height:12.1px;color:#0f5f8d;font-weight:700;transform:scaleX(0.9300);">00:00:14</div>
<div class="t" style="left:518.80px;transform-origin:0 0;top:194.56px;font-size:12.1px;line-height:12.1px;color:#0f5f8d;font-weight:700;transform:scaleX(0.9300);">00:00:14</div>
<div class="t" style="left:701.00px;transform-origin:0 0;top:194.56px;font-size:12.1px;line-height:12.1px;color:#0f5f8d;font-weight:700;transform:scaleX(0.9300);">6:6:3761128</div>
<div class="t" style="left:814.60px;transform-origin:0 0;top:194.56px;font-size:12.1px;line-height:12.1px;color:#0f5f8d;font-weight:700;transform:scaleX(0.9300);">I/O Complete</div>
<div class="t" style="left:928.30px;transform-origin:0 0;top:194.56px;font-size:12.1px;line-height:12.1px;color:#0f5f8d;font-weight:700;transform:scaleX(0.9300);">181.9 MB</div>
<div class="t" style="left:1041.30px;transform-origin:0 0;top:194.56px;font-size:12.1px;line-height:12.1px;color:#0f5f8d;font-weight:700;transform:scaleX(0.9300);">14.7 GB</div>
<div class="t" style="left:1154.80px;transform-origin:0 0;top:194.56px;font-size:12.1px;line-height:12.1px;color:#0f5f8d;font-weight:700;transform:scaleX(0.9300);">3 sec</div>
<div class="t" style="left:1268.30px;transform-origin:0 0;top:194.56px;font-size:12.1px;line-height:12.1px;color:#0f5f8d;font-weight:700;transform:scaleX(0.9300);">12 MB</div>
<div class="t" style="left:1381.50px;transform-origin:0 0;top:194.56px;font-size:12.1px;line-height:12.1px;color:#0f5f8d;font-weight:700;transform:scaleX(0.9300);">0</div>
<div class="t" style="left:1495.00px;transform-origin:0 0;top:194.56px;font-size:12.1px;line-height:12.1px;color:#0f5f8d;font-weight:700;transform:scaleX(0.9300);">132.2 MB</div>
<svg style="position:absolute;left:86px;top:181.5px;" width="30" height="32" viewBox="0 0 30 32"><g fill="none" stroke="#6a5a2a" stroke-width="1.15" stroke-linecap="round"><path d="M 8.5,13.39 A 8,8 0 1 1 8.5,24.71"/><line x1="11.7" y1="7.55" x2="16.6" y2="7.55"/><line x1="14.16" y1="7.55" x2="14.16" y2="11"/><line x1="20.1" y1="12.45" x2="22.2" y2="11.05" stroke-width="1.8"/><line x1="4.2" y1="15.55" x2="9.4" y2="15.55"/><line x1="5.6" y1="19.35" x2="10.4" y2="19.35"/><line x1="4.2" y1="22.65" x2="9.4" y2="22.65"/><circle cx="14.16" cy="19.3" r="1.25"/><line x1="15" y1="18.3" x2="18" y2="15.25"/><line x1="14.16" y1="13.4" x2="14.16" y2="14.2"/><line x1="19.4" y1="19.35" x2="20.2" y2="19.35"/><line x1="14.16" y1="24.4" x2="14.16" y2="25.2"/><line x1="17.9" y1="23.2" x2="18.5" y2="23.8"/></g></svg>
<div style="position:absolute;left:295px;top:221px;width:310.5px;height:39px;background:#fcf4cc;"></div>
<div style="position:absolute;left:75px;top:260px;width:1505px;height:1px;background:#e6e6e6;"></div>
<div class="t" style="left:113.00px;transform-origin:0 0;top:231.66px;font-size:12.1px;line-height:12.1px;color:#3c3c3c;transform:scaleX(0.9450);">sa - (310)</div>
<div class="t" style="left:303.60px;transform-origin:0 0;top:233.56px;font-size:12.1px;line-height:12.1px;color:#3c3c3c;transform:scaleX(0.9450);">06-03-2023 00:17</div>
<div class="t" style="left:422.80px;transform-origin:0 0;top:233.56px;font-size:12.1px;line-height:12.1px;color:#3c3c3c;transform:scaleX(0.9450);">00:00:42</div>
<div class="t" style="left:518.80px;transform-origin:0 0;top:233.56px;font-size:12.1px;line-height:12.1px;color:#3c3c3c;transform:scaleX(0.9450);">00:00:42</div>
<div class="t" style="left:814.60px;transform-origin:0 0;top:233.56px;font-size:12.1px;line-height:12.1px;color:#3c3c3c;transform:scaleX(0.9450);">SQL Internal</div>
<div class="t" style="left:928.30px;transform-origin:0 0;top:233.56px;font-size:12.1px;line-height:12.1px;color:#3c3c3c;transform:scaleX(0.9450);">Bit</div>
<div class="t" style="left:1154.80px;transform-origin:0 0;top:233.56px;font-size:12.1px;line-height:12.1px;color:#3c3c3c;transform:scaleX(0.9450);">2 sec</div>
<div class="t" style="left:1268.30px;transform-origin:0 0;top:233.56px;font-size:12.1px;line-height:12.1px;color:#3c3c3c;transform:scaleX(0.9450);">0</div>
<div class="t" style="left:1381.50px;transform-origin:0 0;top:233.56px;font-size:12.1px;line-height:12.1px;color:#3c3c3c;transform:scaleX(0.9450);">0</div>
<div class="t" style="left:1495.00px;transform-origin:0 0;top:233.56px;font-size:12.1px;line-height:12.1px;color:#3c3c3c;transform:scaleX(0.9450);">0</div>
<svg style="position:absolute;left:86px;top:220.5px;" width="30" height="32" viewBox="0 0 30 32"><g fill="none" stroke="#555555" stroke-width="1.15" stroke-linecap="round"><path d="M 8.5,13.39 A 8,8 0 1 1 8.5,24.71"/><line x1="11.7" y1="7.55" x2="16.6" y2="7.55"/><line x1="14.16" y1="7.55" x2="14.16" y2="11"/><line x1="20.1" y1="12.45" x2="22.2" y2="11.05" stroke-width="1.8"/><line x1="4.2" y1="15.55" x2="9.4" y2="15.55"/><line x1="5.6" y1="19.35" x2="10.4" y2="19.35"/><line x1="4.2" y1="22.65" x2="9.4" y2="22.65"/><circle cx="14.16" cy="19.3" r="1.25"/><line x1="15" y1="18.3" x2="18" y2="15.25"/><line x1="14.16" y1="13.4" x2="14.16" y2="14.2"/><line x1="19.4" y1="19.35" x2="20.2" y2="19.35"/><line x1="14.16" y1="24.4" x2="14.16" y2="25.2"/><line x1="17.9" y1="23.2" x2="18.5" y2="23.8"/></g></svg>
<div style="position:absolute;left:295px;top:261px;width:310.5px;height:38px;background:#fcf4cc;"></div>
<div style="position:absolute;left:75px;top:299px;width:1505px;height:1px;background:#e6e6e6;"></div>
<div class="t" style="left:113.00px;transform-origin:0 0;top:271.66px;font-size:12.1px;line-height:12.1px;color:#3c3c3c;transform:scaleX(0.9450);">sa - (80)</div>
<div class="t" style="left:303.60px;transform-origin:0 0;top:273.56px;font-size:12.1px;line-height:12.1px;color:#3c3c3c;transform:scaleX(0.9450);">06-03-2023 06:35</div>
<div class="t" style="left:422.80px;transform-origin:0 0;top:273.56px;font-size:12.1px;line-height:12.1px;color:#3c3c3c;transform:scaleX(0.9450);">00:00:06</div>
<div class="t" style="left:518.80px;transform-origin:0 0;top:273.56px;font-size:12.1px;line-height:12.1px;color:#3c3c3c;transform:scaleX(0.9450);">00:00:06</div>
<div class="t" style="left:814.60px;transform-origin:0 0;top:273.56px;font-size:12.1px;line-height:12.1px;color:#3c3c3c;transform:scaleX(0.9450);">CPU</div>
<div class="t" style="left:928.30px;transform-origin:0 0;top:273.56px;font-size:12.1px;line-height:12.1px;color:#3c3c3c;transform:scaleX(0.9450);">439.8 MB</div>
<div class="t" style="left:1041.30px;transform-origin:0 0;top:273.56px;font-size:12.1px;line-height:12.1px;color:#3c3c3c;transform:scaleX(0.9450);">851.3 MB</div>
<div class="t" style="left:1154.80px;transform-origin:0 0;top:273.56px;font-size:12.1px;line-height:12.1px;color:#3c3c3c;transform:scaleX(0.9450);">3 sec</div>
<div class="t" style="left:1268.30px;transform-origin:0 0;top:273.56px;font-size:12.1px;line-height:12.1px;color:#3c3c3c;transform:scaleX(0.9450);">0</div>
<div class="t" style="left:1381.50px;transform-origin:0 0;top:273.56px;font-size:12.1px;line-height:12.1px;color:#3c3c3c;transform:scaleX(0.9450);">0</div>
<div class="t" style="left:1495.00px;transform-origin:0 0;top:273.56px;font-size:12.1px;line-height:12.1px;color:#3c3c3c;transform:scaleX(0.9450);">0</div>
<svg style="position:absolute;left:86px;top:260.5px;" width="30" height="32" viewBox="0 0 30 32"><g fill="none" stroke="#555555" stroke-width="1.15" stroke-linecap="round"><path d="M 8.5,13.39 A 8,8 0 1 1 8.5,24.71"/><line x1="11.7" y1="7.55" x2="16.6" y2="7.55"/><line x1="14.16" y1="7.55" x2="14.16" y2="11"/><line x1="20.1" y1="12.45" x2="22.2" y2="11.05" stroke-width="1.8"/><line x1="4.2" y1="15.55" x2="9.4" y2="15.55"/><line x1="5.6" y1="19.35" x2="10.4" y2="19.35"/><line x1="4.2" y1="22.65" x2="9.4" y2="22.65"/><circle cx="14.16" cy="19.3" r="1.25"/><line x1="15" y1="18.3" x2="18" y2="15.25"/><line x1="14.16" y1="13.4" x2="14.16" y2="14.2"/><line x1="19.4" y1="19.35" x2="20.2" y2="19.35"/><line x1="14.16" y1="24.4" x2="14.16" y2="25.2"/><line x1="17.9" y1="23.2" x2="18.5" y2="23.8"/></g></svg>
<div style="position:absolute;left:295px;top:300px;width:310.5px;height:38px;background:#fcf4cc;"></div>
<div style="position:absolute;left:75px;top:338px;width:1505px;height:1px;background:#e6e6e6;"></div>
<div class="t" style="left:113.00px;transform-origin:0 0;top:310.66px;font-size:12.1px;line-height:12.1px;color:#3c3c3c;transform:scaleX(0.9022);">MDBUSR - (338)</div>
<div class="t" style="left:303.60px;transform-origin:0 0;top:312.56px;font-size:12.1px;line-height:12.1px;color:#3c3c3c;transform:scaleX(0.9450);">06-03-2023 15:33</div>
<div class="t" style="left:422.80px;transform-origin:0 0;top:312.56px;font-size:12.1px;line-height:12.1px;color:#3c3c3c;transform:scaleX(0.9450);">00:00:15</div>
<div class="t" style="left:518.80px;transform-origin:0 0;top:312.56px;font-size:12.1px;line-height:12.1px;color:#3c3c3c;transform:scaleX(0.9450);">00:00:15</div>
<div class="t" style="left:814.60px;transform-origin:0 0;top:312.56px;font-size:12.1px;line-height:12.1px;color:#3c3c3c;transform:scaleX(0.9450);">SQL Internal</div>
<div class="t" style="left:928.30px;transform-origin:0 0;top:312.56px;font-size:12.1px;line-height:12.1px;color:#3c3c3c;transform:scaleX(0.9450);">Bit</div>
<div class="t" style="left:1154.80px;transform-origin:0 0;top:312.56px;font-size:12.1px;line-height:12.1px;color:#3c3c3c;transform:scaleX(0.9450);">6 sec</div>
<div class="t" style="left:1268.30px;transform-origin:0 0;top:312.56px;font-size:12.1px;line-height:12.1px;color:#3c3c3c;transform:scaleX(0.9450);">0</div>
<div class="t" style="left:1381.50px;transform-origin:0 0;top:312.56px;font-size:12.1px;line-height:12.1px;color:#3c3c3c;transform:scaleX(0.9450);">0</div>
<div class="t" style="left:1495.00px;transform-origin:0 0;top:312.56px;font-size:12.1px;line-height:12.1px;color:#3c3c3c;transform:scaleX(0.9450);">0</div>
<svg style="position:absolute;left:86px;top:299.5px;" width="30" height="32" viewBox="0 0 30 32"><g fill="none" stroke="#555555" stroke-width="1.15" stroke-linecap="round"><path d="M 8.5,13.39 A 8,8 0 1 1 8.5,24.71"/><line x1="11.7" y1="7.55" x2="16.6" y2="7.55"/><line x1="14.16" y1="7.55" x2="14.16" y2="11"/><line x1="20.1" y1="12.45" x2="22.2" y2="11.05" stroke-width="1.8"/><line x1="4.2" y1="15.55" x2="9.4" y2="15.55"/><line x1="5.6" y1="19.35" x2="10.4" y2="19.35"/><line x1="4.2" y1="22.65" x2="9.4" y2="22.65"/><circle cx="14.16" cy="19.3" r="1.25"/><line x1="15" y1="18.3" x2="18" y2="15.25"/><line x1="14.16" y1="13.4" x2="14.16" y2="14.2"/><line x1="19.4" y1="19.35" x2="20.2" y2="19.35"/><line x1="14.16" y1="24.4" x2="14.16" y2="25.2"/><line x1="17.9" y1="23.2" x2="18.5" y2="23.8"/></g></svg>
<div style="position:absolute;left:295px;top:339px;width:310.5px;height:38px;background:#fcf4cc;"></div>
<div style="position:absolute;left:75px;top:377px;width:1505px;height:1px;background:#e6e6e6;"></div>
<div class="t" style="left:113.00px;transform-origin:0 0;top:349.66px;font-size:12.1px;line-height:12.1px;color:#3c3c3c;transform:scaleX(0.9450);">sa - (309)</div>
<div class="t" style="left:303.60px;transform-origin:0 0;top:351.56px;font-size:12.1px;line-height:12.1px;color:#3c3c3c;transform:scaleX(0.9450);">05-03-2023 17:49</div>
<div class="t" style="left:422.80px;transform-origin:0 0;top:351.56px;font-size:12.1px;line-height:12.1px;color:#3c3c3c;transform:scaleX(0.9450);">00:00:07</div>
<div class="t" style="left:518.80px;transform-origin:0 0;top:351.56px;font-size:12.1px;line-height:12.1px;color:#3c3c3c;transform:scaleX(0.9450);">00:00:07</div>
<div class="t" style="left:814.60px;transform-origin:0 0;top:351.56px;font-size:12.1px;line-height:12.1px;color:#3c3c3c;transform:scaleX(0.9450);">Network I/O</div>
<div class="t" style="left:928.30px;transform-origin:0 0;top:351.56px;font-size:12.1px;line-height:12.1px;color:#3c3c3c;transform:scaleX(0.9450);">127.9 MB</div>
<div class="t" style="left:1041.30px;transform-origin:0 0;top:351.56px;font-size:12.1px;line-height:12.1px;color:#3c3c3c;transform:scaleX(0.9450);">5 GB</div>
<div class="t" style="left:1154.80px;transform-origin:0 0;top:351.56px;font-size:12.1px;line-height:12.1px;color:#3c3c3c;transform:scaleX(0.9450);">3 sec</div>
<div class="t" style="left:1268.30px;transform-origin:0 0;top:351.56px;font-size:12.1px;line-height:12.1px;color:#3c3c3c;transform:scaleX(0.9450);">104 MB</div>
<div class="t" style="left:1381.50px;transform-origin:0 0;top:351.56px;font-size:12.1px;line-height:12.1px;color:#3c3c3c;transform:scaleX(0.9450);">0</div>
<div class="t" style="left:1495.00px;transform-origin:0 0;top:351.56px;font-size:12.1px;line-height:12.1px;color:#3c3c3c;transform:scaleX(0.9450);">0</div>
<svg style="position:absolute;left:86px;top:338.5px;" width="30" height="32" viewBox="0 0 30 32"><g fill="none" stroke="#555555" stroke-width="1.15" stroke-linecap="round"><path d="M 8.5,13.39 A 8,8 0 1 1 8.5,24.71"/><line x1="11.7" y1="7.55" x2="16.6" y2="7.55"/><line x1="14.16" y1="7.55" x2="14.16" y2="11"/><line x1="20.1" y1="12.45" x2="22.2" y2="11.05" stroke-width="1.8"/><line x1="4.2" y1="15.55" x2="9.4" y2="15.55"/><line x1="5.6" y1="19.35" x2="10.4" y2="19.35"/><line x1="4.2" y1="22.65" x2="9.4" y2="22.65"/><circle cx="14.16" cy="19.3" r="1.25"/><line x1="15" y1="18.3" x2="18" y2="15.25"/><line x1="14.16" y1="13.4" x2="14.16" y2="14.2"/><line x1="19.4" y1="19.35" x2="20.2" y2="19.35"/><line x1="14.16" y1="24.4" x2="14.16" y2="25.2"/><line x1="17.9" y1="23.2" x2="18.5" y2="23.8"/></g></svg>
<div style="position:absolute;left:680px;top:156.7px;width:1px;height:221.3px;background:#acacac;"></div>
<div style="position:absolute;left:681px;top:156.7px;width:1px;height:221.3px;background:#dedede;"></div>
<div style="position:absolute;left:1580px;top:156.7px;width:8px;height:221.3px;background:#e0e0e0;"></div>
<div style="position:absolute;left:1581px;top:183px;width:6px;height:30px;background:#b4b4b4;"></div>
<div style="position:absolute;left:75px;top:378px;width:1513px;height:8px;background:#f3f3f3;"></div>
<div style="position:absolute;left:681.5px;top:378px;width:890.0px;height:7px;background:#e1e1e1;"></div>
<div style="position:absolute;left:1078px;top:379px;width:348px;height:5.5px;background:#b4b4b4;"></div>
<div style="position:absolute;left:1571.5px;top:378.5px;width:8.5px;height:6.5px;background:#fafafa;"></div>
<div style="position:absolute;left:74px;top:386px;width:1514px;height:2px;background:#f3f3f3;"></div>
<div style="position:absolute;left:74px;top:388px;width:1514px;height:9.5px;background:#ececec;"></div>
<svg style="position:absolute;left:0px;top:0px;pointer-events:none;" width="1600" height="850" viewBox="0 0 1600 850"><g fill="#b8b8b8"><rect x="818.8" y="391.0" width="1.3" height="1.3"/><rect x="818.8" y="393.3" width="1.3" height="1.3"/><rect x="822.0" y="391.0" width="1.3" height="1.3"/><rect x="822.0" y="393.3" width="1.3" height="1.3"/><rect x="825.2" y="391.0" width="1.3" height="1.3"/><rect x="825.2" y="393.3" width="1.3" height="1.3"/><rect x="828.4" y="391.0" width="1.3" height="1.3"/><rect x="828.4" y="393.3" width="1.3" height="1.3"/><rect x="831.6" y="391.0" width="1.3" height="1.3"/><rect x="831.6" y="393.3" width="1.3" height="1.3"/><rect x="834.8" y="391.0" width="1.3" height="1.3"/><rect x="834.8" y="393.3" width="1.3" height="1.3"/><rect x="838.0" y="391.0" width="1.3" height="1.3"/><rect x="838.0" y="393.3" width="1.3" height="1.3"/><rect x="841.2" y="391.0" width="1.3" height="1.3"/><rect x="841.2" y="393.3" width="1.3" height="1.3"/></g></svg>
<div style="position:absolute;left:74px;top:397.5px;width:1514px;height:444.5px;background:#ffffff;"></div>
<div style="position:absolute;left:74px;top:430.6px;width:1514px;height:1.0px;background:#ebebeb;"></div>
<div style="position:absolute;left:85px;top:429px;width:46px;height:2px;background:#03659c;"></div>
<div class="t" style="left:97.00px;transform-origin:0 0;top:407.54px;font-size:12px;line-height:12px;color:#7ea6cb;transform:scaleX(0.9370);">SQL</div>
<div class="t" style="left:144.30px;transform-origin:0 0;top:407.54px;font-size:12px;line-height:12px;color:#8a8a8a;transform:scaleX(0.9470);">Last Execute</div>
<svg style="position:absolute;left:1560px;top:404px;" width="22" height="22" viewBox="0 0 22 22"><g stroke="#6a6a6a" stroke-width="1.2"><line x1="3.8" y1="3" x2="17.8" y2="17"/><line x1="17.8" y1="3" x2="3.8" y2="17"/></g></svg>
<div class="t" style="left:85.6px;top:450.74px;font-family:'Liberation Mono',monospace;font-size:11.4px;line-height:11.4px;transform:scaleX(0.925);transform-origin:0 0;"><span style="color:#4a4a4a;-webkit-text-stroke:0.2px #4a4a4a;">(@P0 </span><span style="color:#1f1fa8;-webkit-text-stroke:0.35px #1f1fa8;">INT</span><span style="color:#4a4a4a;-webkit-text-stroke:0.2px #4a4a4a;">)</span></div>
<div class="t" style="left:85.6px;top:485.24px;font-family:'Liberation Mono',monospace;font-size:11.4px;line-height:11.4px;transform:scaleX(0.925);transform-origin:0 0;"><span style="color:#1f1fa8;-webkit-text-stroke:0.35px #1f1fa8;">DELETE</span></div>
<div class="t" style="left:85.6px;top:502.74px;font-family:'Liberation Mono',monospace;font-size:11.4px;line-height:11.4px;transform:scaleX(0.925);transform-origin:0 0;"><span style="color:#1f1fa8;-webkit-text-stroke:0.35px #1f1fa8;">FROM</span><span style="color:#4a4a4a;-webkit-text-stroke:0.2px #4a4a4a;"> MVXJDTA.MPDSUM</span></div>
<div class="t" style="left:85.6px;top:520.24px;font-family:'Liberation Mono',monospace;font-size:11.4px;line-height:11.4px;transform:scaleX(0.925);transform-origin:0 0;"><span style="color:#1f1fa8;-webkit-text-stroke:0.35px #1f1fa8;">WHERE</span><span style="color:#4a4a4a;-webkit-text-stroke:0.2px #4a4a4a;"> PSCONO = @P0</span></div>
<div style="position:absolute;left:819.5px;top:807px;width:70.29999999999995px;height:25.5px;background:#f2f6fb;border:1px solid #4f7db3;border-radius:13px;box-sizing:border-box;"></div>
<div style="position:absolute;left:898px;top:807px;width:70px;height:25.5px;background:#3a69a1;border-radius:13px;"></div>
<div class="t" style="left:843.00px;transform-origin:0 0;top:815.07px;font-size:12.2px;line-height:12.2px;color:#4b74a8;transform:scaleX(0.9337);">Plan</div>
<div class="t" style="left:919.00px;transform-origin:0 0;top:815.07px;font-size:12.2px;line-height:12.2px;color:#ffffff;transform:scaleX(0.9480);">Copy</div>
<div style="position:absolute;left:983px;top:431.6px;width:605px;height:410.4px;background:#e6eef5;"></div>
<div class="t" style="left:997.00px;transform-origin:0 0;top:443.67px;font-size:12.2px;line-height:12.2px;color:#2e2e2e;transform:scaleX(0.9446);">Session</div>
<div class="t" style="left:1224.81px;transform-origin:100% 0;top:444.67px;font-size:12.2px;line-height:12.2px;color:#5c5c5c;transform:scaleX(0.9003);">MDBUSR - (305)</div>
<div style="position:absolute;left:995.5px;top:464.5px;width:326.0px;height:1.0px;background:#d2dae1;"></div>
<div class="t" style="left:997.00px;transform-origin:0 0;top:469.82px;font-size:12.2px;line-height:12.2px;color:#2e2e2e;transform:scaleX(0.9465);">Runtime</div>
<div class="t" style="left:1220.67px;transform-origin:100% 0;top:470.82px;font-size:12.2px;line-height:12.2px;color:#5c5c5c;transform:scaleX(0.9395);">06-03-2023 06:00</div>
<div style="position:absolute;left:995.5px;top:490.65px;width:326.0px;height:1.0px;background:#d2dae1;"></div>
<div class="t" style="left:997.00px;transform-origin:0 0;top:495.97px;font-size:12.2px;line-height:12.2px;color:#2e2e2e;transform:scaleX(0.9541);">Duration</div>
<div class="t" style="left:1269.51px;transform-origin:100% 0;top:496.97px;font-size:12.2px;line-height:12.2px;color:#5c5c5c;transform:scaleX(0.9370);">00:00:14</div>
<div style="position:absolute;left:995.5px;top:516.8px;width:326.0px;height:1.0px;background:#d2dae1;"></div>
<div class="t" style="left:997.00px;transform-origin:0 0;top:522.12px;font-size:12.2px;line-height:12.2px;color:#2e2e2e;transform:scaleX(0.9358);">Query Hash/ID</div>
<div class="t" style="left:1136.50px;transform-origin:0 0;top:523.12px;font-size:12.2px;line-height:12.2px;color:#5c5c5c;transform:scaleX(0.9470);">0x02000000733E162F7F83AF59...</div>
<div style="position:absolute;left:995.5px;top:542.95px;width:326.0px;height:1.0px;background:#d2dae1;"></div>
<div class="t" style="left:997.00px;transform-origin:0 0;top:548.27px;font-size:12.2px;line-height:12.2px;color:#2e2e2e;transform:scaleX(0.9443);">App</div>
<div class="t" style="left:1136.50px;transform-origin:0 0;top:549.27px;font-size:12.2px;line-height:12.2px;color:#5c5c5c;transform:scaleX(0.9299);">Microsoft JDBC Driver for SQL Se...</div>
<div style="position:absolute;left:995.5px;top:569.1px;width:326.0px;height:1.0px;background:#d2dae1;"></div>
<div class="t" style="left:997.00px;transform-origin:0 0;top:574.42px;font-size:12.2px;line-height:12.2px;color:#2e2e2e;transform:scaleX(0.9456);">Process Id</div>
<div class="t" style="left:1310.21px;transform-origin:100% 0;top:575.42px;font-size:12.2px;line-height:12.2px;color:#5c5c5c;transform:scaleX(0.9300);">0</div>
<div style="position:absolute;left:995.5px;top:595.25px;width:326.0px;height:1.0px;background:#d2dae1;"></div>
<div class="t" style="left:997.00px;transform-origin:0 0;top:600.57px;font-size:12.2px;line-height:12.2px;color:#2e2e2e;transform:scaleX(0.9540);">Instance</div>
<div class="t" style="left:1283.10px;transform-origin:100% 0;top:601.57px;font-size:12.2px;line-height:12.2px;color:#5c5c5c;transform:scaleX(0.9293);">M3DB</div>
<div style="position:absolute;left:995.5px;top:621.4px;width:326.0px;height:1.0px;background:#d2dae1;"></div>
<div class="t" style="left:997.00px;transform-origin:0 0;top:626.72px;font-size:12.2px;line-height:12.2px;color:#2e2e2e;transform:scaleX(0.8555);">DB</div>
<div class="t" style="left:1249.89px;transform-origin:100% 0;top:627.72px;font-size:12.2px;line-height:12.2px;color:#5c5c5c;transform:scaleX(0.8941);">M3FDBPRD</div>
<div style="position:absolute;left:995.5px;top:647.55px;width:326.0px;height:1.0px;background:#d2dae1;"></div>
<div class="t" style="left:997.00px;transform-origin:0 0;top:652.87px;font-size:12.2px;line-height:12.2px;color:#2e2e2e;transform:scaleX(0.9458);">Client</div>
<div class="t" style="left:1267.51px;transform-origin:100% 0;top:653.87px;font-size:12.2px;line-height:12.2px;color:#5c5c5c;transform:scaleX(0.9698);">M3Home</div>
<div style="position:absolute;left:995.5px;top:673.7px;width:326.0px;height:1.0px;background:#d2dae1;"></div>
<div class="t" style="left:997.00px;transform-origin:0 0;top:679.02px;font-size:12.2px;line-height:12.2px;color:#2e2e2e;transform:scaleX(0.9506);">Command</div>
<div class="t" style="left:1269.54px;transform-origin:100% 0;top:680.02px;font-size:12.2px;line-height:12.2px;color:#5c5c5c;transform:scaleX(0.8639);">DELETE</div>
<div style="position:absolute;left:995.5px;top:699.85px;width:326.0px;height:1.0px;background:#d2dae1;"></div>
<div class="t" style="left:997.00px;transform-origin:0 0;top:705.17px;font-size:12.2px;line-height:12.2px;color:#2e2e2e;transform:scaleX(0.9677);">Transaction Isolation</div>
<div class="t" style="left:1219.35px;transform-origin:100% 0;top:706.17px;font-size:12.2px;line-height:12.2px;color:#5c5c5c;transform:scaleX(0.9780);">read uncommitted</div>
<div style="position:absolute;left:995.5px;top:726.0px;width:326.0px;height:1.0px;background:#d2dae1;"></div>
<div class="t" style="left:997.00px;transform-origin:0 0;top:731.32px;font-size:12.2px;line-height:12.2px;color:#2e2e2e;transform:scaleX(0.9365);">Wait Resource</div>
<div class="t" style="left:1250.06px;transform-origin:100% 0;top:732.32px;font-size:12.2px;line-height:12.2px;color:#5c5c5c;transform:scaleX(0.9635);">6:6:3761128</div>
<div class="t" style="left:1339.70px;transform-origin:0 0;top:443.67px;font-size:12.2px;line-height:12.2px;color:#2e2e2e;transform:scaleX(0.9541);">Status</div>
<div class="t" style="left:1499.30px;transform-origin:100% 0;top:444.67px;font-size:12.2px;line-height:12.2px;color:#5c5c5c;transform:scaleX(0.9464);">suspended</div>
<div style="position:absolute;left:1338px;top:464.5px;width:225px;height:1.0px;background:#d2dae1;"></div>
<div class="t" style="left:1339.70px;transform-origin:0 0;top:469.82px;font-size:12.2px;line-height:12.2px;color:#2e2e2e;transform:scaleX(0.9384);">Threads</div>
<div class="t" style="left:1552.21px;transform-origin:100% 0;top:470.82px;font-size:12.2px;line-height:12.2px;color:#5c5c5c;transform:scaleX(0.9300);">1</div>
<div style="position:absolute;left:1338px;top:490.65px;width:225px;height:1.0px;background:#d2dae1;"></div>
<div class="t" style="left:1339.70px;transform-origin:0 0;top:495.97px;font-size:12.2px;line-height:12.2px;color:#2e2e2e;transform:scaleX(0.9601);">Blocks</div>
<div class="t" style="left:1552.21px;transform-origin:100% 0;top:496.97px;font-size:12.2px;line-height:12.2px;color:#5c5c5c;transform:scaleX(0.9300);">0</div>
<div style="position:absolute;left:1338px;top:516.8px;width:225px;height:1.0px;background:#d2dae1;"></div>
<div class="t" style="left:1339.70px;transform-origin:0 0;top:522.12px;font-size:12.2px;line-height:12.2px;color:#2e2e2e;transform:scaleX(0.9107);">Open Tran</div>
<div class="t" style="left:1552.21px;transform-origin:100% 0;top:523.12px;font-size:12.2px;line-height:12.2px;color:#5c5c5c;transform:scaleX(0.9300);">2</div>
<div style="position:absolute;left:1338px;top:542.95px;width:225px;height:1.0px;background:#d2dae1;"></div>
<div class="t" style="left:1339.70px;transform-origin:0 0;top:548.27px;font-size:12.2px;line-height:12.2px;color:#2e2e2e;transform:scaleX(0.8735);">CPU</div>
<div class="t" style="left:1529.84px;transform-origin:100% 0;top:549.27px;font-size:12.2px;line-height:12.2px;color:#5c5c5c;transform:scaleX(0.9431);">3 sec</div>
<div style="position:absolute;left:1338px;top:569.1px;width:225px;height:1.0px;background:#d2dae1;"></div>
<div class="t" style="left:1339.70px;transform-origin:0 0;top:574.42px;font-size:12.2px;line-height:12.2px;color:#2e2e2e;transform:scaleX(0.9452);">Disk I/O</div>
<div class="t" style="left:1506.78px;transform-origin:100% 0;top:575.42px;font-size:12.2px;line-height:12.2px;color:#5c5c5c;transform:scaleX(0.9383);">181.9 MB</div>
<div style="position:absolute;left:1338px;top:595.25px;width:225px;height:1.0px;background:#d2dae1;"></div>
<div class="t" style="left:1339.70px;transform-origin:0 0;top:600.57px;font-size:12.2px;line-height:12.2px;color:#2e2e2e;transform:scaleX(0.9405);">TempDB</div>
<div class="t" style="left:1523.74px;transform-origin:100% 0;top:601.57px;font-size:12.2px;line-height:12.2px;color:#5c5c5c;transform:scaleX(0.9359);">12 MB</div>
<div style="position:absolute;left:1338px;top:621.4px;width:225px;height:1.0px;background:#d2dae1;"></div>
<div class="t" style="left:1339.70px;transform-origin:0 0;top:626.72px;font-size:12.2px;line-height:12.2px;color:#2e2e2e;transform:scaleX(0.9358);">TempDB Log</div>
<div class="t" style="left:1552.21px;transform-origin:100% 0;top:627.72px;font-size:12.2px;line-height:12.2px;color:#5c5c5c;transform:scaleX(0.9300);">0</div>
<div style="position:absolute;left:1338px;top:647.55px;width:225px;height:1.0px;background:#d2dae1;"></div>
<div class="t" style="left:1339.70px;transform-origin:0 0;top:652.87px;font-size:12.2px;line-height:12.2px;color:#2e2e2e;transform:scaleX(0.9092);">DB Log</div>
<div class="t" style="left:1506.78px;transform-origin:100% 0;top:653.87px;font-size:12.2px;line-height:12.2px;color:#5c5c5c;transform:scaleX(0.9383);">132.2 MB</div>
<div style="position:absolute;left:1338px;top:673.7px;width:225px;height:1.0px;background:#d2dae1;"></div>
<div class="t" style="left:1339.70px;transform-origin:0 0;top:679.02px;font-size:12.2px;line-height:12.2px;color:#2e2e2e;transform:scaleX(0.9604);">Wait</div>
<div class="t" style="left:1450.97px;transform-origin:100% 0;top:680.02px;font-size:12.2px;line-height:12.2px;color:#5c5c5c;transform:scaleX(0.8794);">PAGEIOLATCH_EX</div>
<div style="position:absolute;left:1588px;top:121px;width:2px;height:721px;background:#e3e3e3;"></div>
<div style="position:absolute;left:1590px;top:121px;width:1px;height:721px;background:#e9e9e9;"></div>
</body></html>
